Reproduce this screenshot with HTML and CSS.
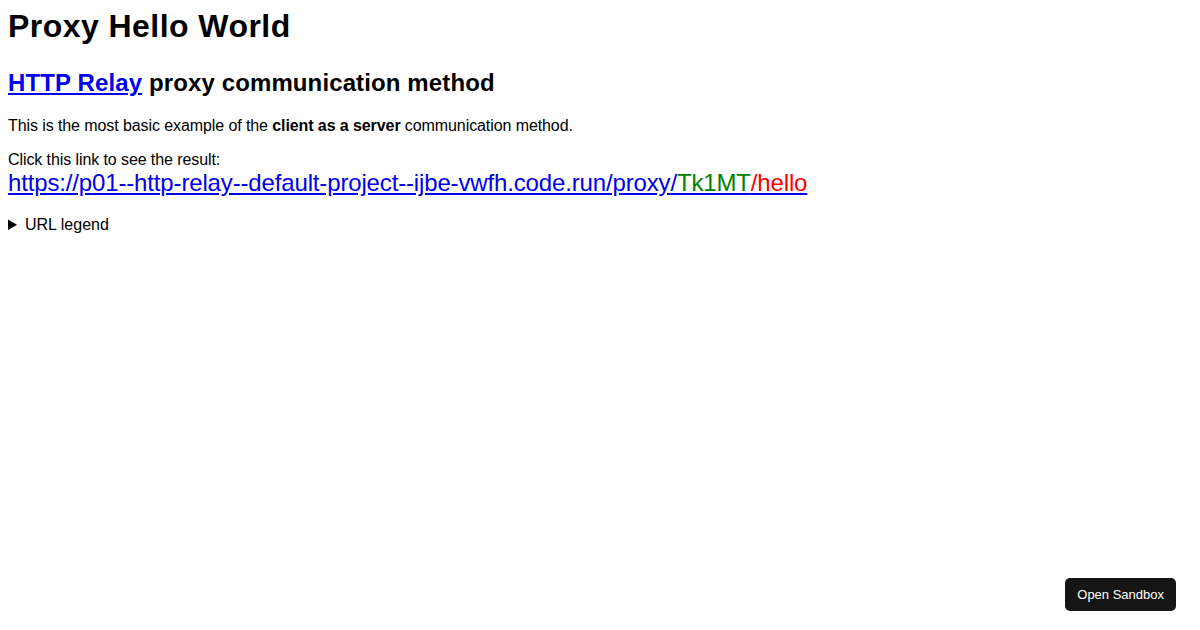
FILE: index.html
```html
<!DOCTYPE html>
<html>
<head>
	<meta charset="UTF-8">
	<title>Proxy Hello World</title>
	<link rel="stylesheet" href="styles.css">
</head>
<body>
<h1>Proxy Hello World</h1>
<h2><a href="#">HTTP Relay</a> proxy communication method</h2>
<p>This is the most basic example of the <b>client as a server</b> communication method.</p>
<p>Click this link to see the result:<br>
	<a class="result" href="#">https://p01--http-relay--default-project--ijbe-vwfh.code.run/proxy/<span class="job">Tk1MT</span><span class="path">/hello</span></a>
</p>
<details class="legend">
	<summary>URL legend</summary>
</details>
<a class="sandbox" href="#">Open Sandbox</a>
</body>
</html>
```

FILE: styles.css
```css
body{
	margin: 8px;
	font-family: "Liberation Sans", Arial, sans-serif;
	font-size: 16px;
	color: #000;
}
h1{
	font-size: 32px;
	letter-spacing: 0.45px;
	margin: 0;
}
h2{
	font-size: 24px;
	letter-spacing: 0.12px;
	margin: 24px 0 20px;
}
p{
	margin: 16px 0;
	letter-spacing: -0.09px;
}
a{
	color: #0000ee;
}
.result{
	font-size: 24px;
	letter-spacing: -0.15px;
}
.job{
	color: green;
}
.path{
	color: red;
}
.legend{
	margin-top: 19px;
}
summary{
	cursor: pointer;
}
.sandbox{
	position: fixed;
	right: 24px;
	bottom: 19px;
	padding: 0 12px;
	line-height: 33px;
	background-color: #151515;
	color: #fff;
	border-radius: 5px;
	font-size: 13px;
	text-decoration: none;
}
```
